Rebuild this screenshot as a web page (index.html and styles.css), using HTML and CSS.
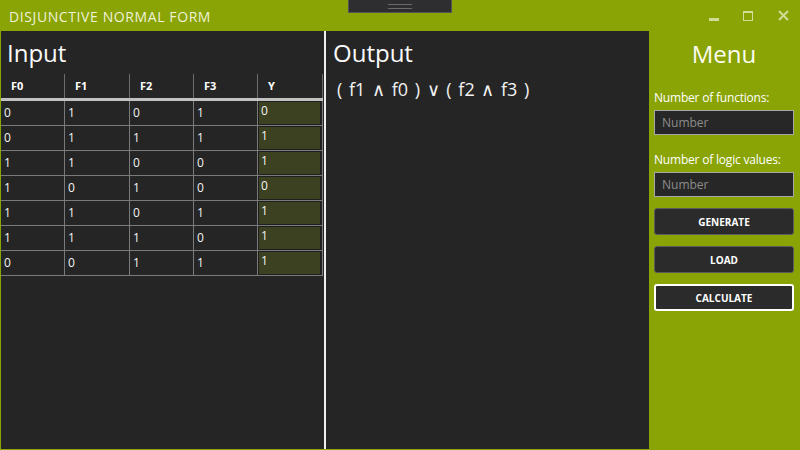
FILE: index.html
```html
<!DOCTYPE html>
<html>
<head>
<meta charset="utf-8">
<link rel="stylesheet" href="styles.css">
</head>
<body>
<div class="window">
  <header class="titlebar">
    <div class="title">DISJUNCTIVE NORMAL FORM</div>
    <div class="handle"><span class="grip"></span></div>
    <div class="controls">
      <span class="ctl min"><svg width="10" height="10" viewBox="0 0 10 10"><rect x="0" y="7" width="10" height="3" fill="#d2dc98"/></svg></span>
      <span class="ctl max"><svg width="10" height="10" viewBox="0 0 10 10"><rect x="0.5" y="0.5" width="9" height="9" fill="none" stroke="#d2dc98" stroke-width="1"/><rect x="0" y="0" width="10" height="2" fill="#d2dc98"/></svg></span>
      <span class="ctl close"><svg width="11" height="11" viewBox="0 0 11 11"><path d="M1 1 L10 10 M10 1 L1 10" stroke="#d2dc98" stroke-width="2"/></svg></span>
    </div>
  </header>
  <main class="main">
    <section class="panel input">
      <h1 class="heading">Input</h1>
      <div class="grid">
        <div class="hrow">
          <div class="hc">F0</div><div class="hc">F1</div><div class="hc">F2</div><div class="hc">F3</div><div class="hc">Y</div>
        </div>
        <div class="sep"></div>
        <div class="row"><div class="c">0</div><div class="c">1</div><div class="c">0</div><div class="c">1</div><div class="c y"><span>0</span></div></div>
        <div class="row"><div class="c">0</div><div class="c">1</div><div class="c">1</div><div class="c">1</div><div class="c y"><span>1</span></div></div>
        <div class="row"><div class="c">1</div><div class="c">1</div><div class="c">0</div><div class="c">0</div><div class="c y"><span>1</span></div></div>
        <div class="row"><div class="c">1</div><div class="c">0</div><div class="c">1</div><div class="c">0</div><div class="c y"><span>0</span></div></div>
        <div class="row"><div class="c">1</div><div class="c">1</div><div class="c">0</div><div class="c">1</div><div class="c y"><span>1</span></div></div>
        <div class="row"><div class="c">1</div><div class="c">1</div><div class="c">1</div><div class="c">0</div><div class="c y"><span>1</span></div></div>
        <div class="row"><div class="c">0</div><div class="c">0</div><div class="c">1</div><div class="c">1</div><div class="c y"><span>1</span></div></div>
      </div>
    </section>
    <div class="divider"></div>
    <section class="panel output">
      <h1 class="heading">Output</h1>
      <div class="formula">( f1 ∧ f0 ) ∨ ( f2 ∧ f3 )</div>
    </section>
    <aside class="menu">
      <h1 class="menu-title">Menu</h1>
      <label class="lbl">Number of functions:</label>
      <div class="field">Number</div>
      <label class="lbl second">Number of logic values:</label>
      <div class="field">Number</div>
      <button class="btn first">GENERATE</button>
      <button class="btn">LOAD</button>
      <button class="btn focus">CALCULATE</button>
    </aside>
  </main>
</div>
</body>
</html>
```
FILE: styles.css
```css
html, body {
  margin: 0;
  padding: 0;
}
body {
  width: 800px;
  height: 450px;
  overflow: hidden;
  background: #8aa305;
  font-family: "Open Sans", "Noto Sans", "Liberation Sans", sans-serif;
  color: #f2f2f2;
}
.window {
  display: flex;
  flex-direction: column;
  height: 450px;
}
.titlebar {
  height: 31px;
  display: flex;
  align-items: flex-start;
  position: relative;
}
.title {
  margin-left: 9px;
  margin-top: 7px;
  font-size: 14px;
  font-weight: 400;
  color: #eef2d8;
  letter-spacing: 0.6px;
  width: 339px;
  white-space: nowrap;
}
.handle {
  width: 102px;
  height: 12px;
  background: #2e2e30;
  border: 1px solid #555558;
  border-top: 0;
  display: flex;
  justify-content: center;
  align-items: center;
}
.grip {
  width: 24px;
  height: 3px;
  border-top: 1px solid #6a6a6a;
  border-bottom: 1px solid #6a6a6a;
}
.controls {
  margin-left: auto;
  display: flex;
  margin-top: 10px;
  margin-right: 11px;
}
.ctl {
  display: flex;
  width: 11px;
  height: 11px;
}
.ctl.min { margin-right: 23px; padding-top: 1px; }
.ctl.max { margin-right: 24px; padding-top: 1px; }
.main {
  flex: 1;
  display: flex;
  padding-left: 1px;
  padding-bottom: 1px;
  min-height: 0;
}
.panel {
  background: #252525;
}
.input {
  width: 323px;
}
.divider {
  width: 2px;
  background: #efefef;
}
.output {
  width: 323px;
}
.heading {
  margin: 0;
  font-size: 24px;
  font-weight: 400;
  line-height: 32px;
  height: 43px;
  padding-top: 6px;
  box-sizing: border-box;
  color: #fafafa;
}
.input .heading { padding-left: 6px; }
.output .heading { padding-left: 7px; }
.grid {
  width: 322px;
}
.hrow, .row {
  display: grid;
  grid-template-columns: 64px 65px 64px 64px 65px;
}
.hrow {
  height: 24px;
}
.hc {
  font-size: 11px;
  font-weight: 700;
  line-height: 24px;
  padding-left: 10px;
  border-right: 1px solid #6c6c6c;
  color: #ffffff;
}
.sep {
  height: 3px;
  background: #c2c2c2;
}
.row {
  height: 25px;
  box-sizing: border-box;
  border-bottom: 1px solid #7a7a7a;
}
.c {
  font-size: 12px;
  line-height: 24px;
  padding-left: 3px;
  border-right: 1px solid #7a7a7a;
  color: #f4f4f4;
}
.c.y {
  padding: 0;
  display: flex;
}
.c.y span {
  flex: 1;
  background: #3b4121;
  border: 1px solid #1f1f1f;
  margin: 0 1px 0 0;
  line-height: 14px;
  padding: 2px 0 0 2px;
}
.formula {
  font-size: 18px;
  padding-left: 11px;
  margin-top: 3px;
  line-height: 24px;
  word-spacing: 2px;
}
.menu {
  flex: 1;
  display: flex;
  flex-direction: column;
  padding: 0 6px 0 5px;
}
.menu-title {
  margin: 0;
  text-align: center;
  font-size: 24px;
  font-weight: 400;
  line-height: 32px;
  padding-top: 7px;
  height: 58px;
  box-sizing: border-box;
  color: #fcfcf0;
}
.lbl {
  font-size: 12px;
  line-height: 17px;
  height: 21px;
  color: #ffffff;
  white-space: nowrap;
  letter-spacing: -0.2px;
}
.lbl.second { margin-top: 16px; }
.field {
  height: 25px;
  box-sizing: border-box;
  background: #272727;
  border: 1px solid #a8a8a8;
  color: #8c8c8c;
  font-size: 12px;
  line-height: 23px;
  padding-left: 7px;
}
.btn {
  height: 27px;
  margin-top: 11px;
  background: #2b2b2b;
  border: 1px solid #5c5c5c;
  border-radius: 3px;
  color: #ffffff;
  font-family: inherit;
  font-size: 10px;
  font-weight: 700;
  padding: 0;
}
.btn.focus {
  border: 2px solid #ffffff;
}
```
